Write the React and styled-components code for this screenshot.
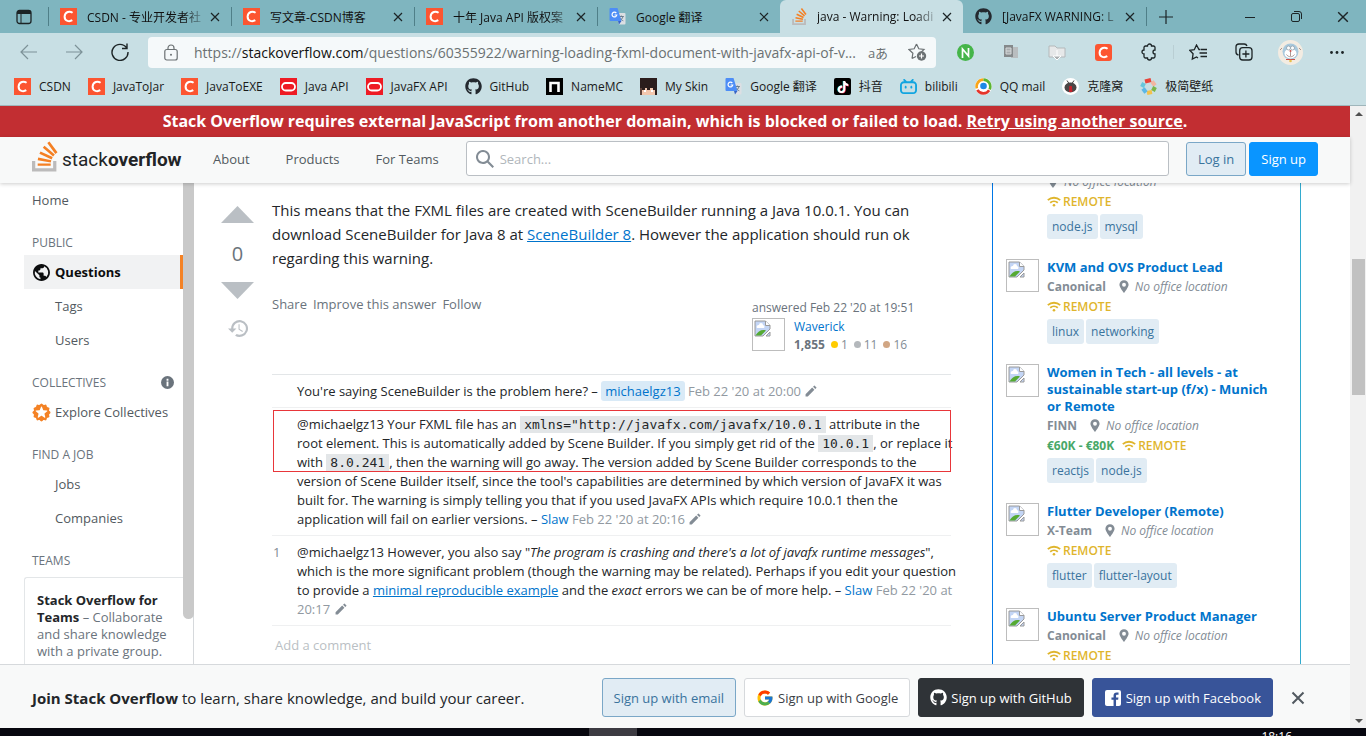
import React, { useState } from "react";
import styled, { createGlobalStyle, css } from "styled-components";
import { FaGithub } from "react-icons/fa";
import { FcGoogle } from "react-icons/fc";
import { SiBilibili, SiTiktok } from "react-icons/si";

const GlobalStyle = createGlobalStyle`
  * {
    box-sizing: border-box;
  }
  body {
    margin: 0;
    overflow: hidden;
    font-family: "Open Sans", "Noto Sans CJK SC", sans-serif;
    font-size: 12px;
    color: #232629;
  }
  button, input {
    font-family: inherit;
  }
  a {
    color: #0074cc;
    text-decoration: none;
  }
  svg {
    display: block;
    flex: none;
  }
`;

/* ---------- browser window ---------- */

const Window = styled.div`
  display: flex;
  flex-direction: column;
  height: 100vh;
  overflow: hidden;
  background-color: #c8dfe4;
`;
const TabStrip = styled.div`
  display: flex;
  align-items: stretch;
  height: 33px;
  flex: none;
  background-color: #7fb5bf;
`;
const IconButton = styled.button`
  display: flex;
  align-items: center;
  justify-content: center;
  flex: none;
  width: ${(p) => p.$width || 46}px;
  padding: 0;
  border: none;
  background: none;
  color: ${(p) => p.$color || "#1c2426"};
`;
const Tab = styled.div`
  display: flex;
  align-items: center;
  flex: 0 1 183px;
  min-width: 0;
  padding: 0 9px 0 12px;
  position: relative;
  ${(p) =>
    p.$active
      ? css`
          background-color: #c8dfe4;
          border-radius: 6px 6px 0 0;
        `
      : css`
          &::before {
            content: "";
            position: absolute;
            left: 0;
            top: 7px;
            bottom: 7px;
            width: 1px;
            background-color: ${p.$noLine ? "transparent" : "#4f7f88"};
          }
        `}
`;
const TabTitle = styled.span`
  flex: 1;
  margin-left: 10px;
  overflow: hidden;
  white-space: nowrap;
  color: #111;
  ${(p) => p.$fade && "mask-image: linear-gradient(to right, #000 80%, transparent);"}
`;
const TabEnd = styled.div`
  width: 1px;
  margin: 7px 0;
  background-color: #4f7f88;
`;
const Spacer = styled.div`
  flex: 1;
`;
const Toolbar = styled.div`
  display: flex;
  align-items: center;
  height: 38px;
  flex: none;
  padding: 0 5px;
`;
const AddressBar = styled.div`
  display: flex;
  align-items: center;
  flex: 1;
  min-width: 0;
  height: 31px;
  margin: 0 6px;
  padding-left: 16px;
  border-radius: 4px;
  background-color: #f5f9fa;
  color: #6b7173;
`;
const Url = styled.div`
  flex: 1;
  min-width: 0;
  margin-left: 16px;
  overflow: hidden;
  white-space: nowrap;
  font-size: 14px;
  outline: none;
  b {
    font-weight: 400;
    color: #111;
  }
`;
const Translate = styled.span`
  font-size: 13px;
`;
const Divider = styled.div`
  width: 1px;
  height: 14px;
  margin: 0 1px;
  background-color: #b9ced3;
`;
const BookmarkBar = styled.nav`
  display: flex;
  align-items: center;
  gap: 17px;
  height: 35px;
  flex: none;
  padding: 0 14px 4px;
  border-bottom: 1px solid #9fb6bb;
`;
const Bookmark = styled.a`
  display: flex;
  align-items: center;
  gap: 8px;
  white-space: nowrap;
  color: #1a1a1a;
`;
const Viewport = styled.div`
  display: flex;
  flex: 1;
  min-height: 0;
`;
const Page = styled.div`
  display: flex;
  flex-direction: column;
  flex: 1;
  min-width: 0;
  background-color: #fff;
  font-size: 13px;
`;
const Scrollbar = styled.div`
  display: flex;
  flex-direction: column;
  align-items: center;
  width: 16px;
  padding: 6px 1px 5px 2px;
  background-color: #f1f1f1;
`;
const ScrollThumb = styled.div`
  width: 13px;
  height: 136px;
  margin-top: 143px;
  margin-bottom: auto;
  background-color: #c1c1c1;
`;
const Arrow = styled.span`
  border: 4px solid transparent;
  ${(p) => (p.$down ? "border-top-color: #505050; border-bottom: 0;" : "border-bottom-color: #505050; border-top: 0;")}
`;
const Taskbar = styled.div`
  display: flex;
  height: 8px;
  flex: none;
  overflow: hidden;
  background-color: #07070f;
`;
const TaskbarApp = styled.div`
  width: 48px;
  margin-left: 589px;
  background-color: #3c3b42;
`;
const Clock = styled.span`
  margin-left: auto;
  margin-right: 74px;
  padding-top: 3px;
  line-height: 12px;
  color: #fff;
`;

/* ---------- site chrome ---------- */

const Banner = styled.div`
  flex: none;
  height: 31px;
  line-height: 31px;
  text-align: center;
  font-size: 16px;
  font-weight: 700;
  color: #fff;
  background-color: #c22e32;
  a {
    color: #fff;
    text-decoration: underline;
  }
`;
const TopBar = styled.header`
  display: flex;
  align-items: center;
  height: 46px;
  flex: none;
  padding: 0 32px 3px;
  background-color: #f8f9f9;
  box-shadow: 0 1px 4px rgba(0, 0, 0, 0.2);
  z-index: 1;
`;
const Logo = styled.a`
  display: flex;
  align-items: flex-end;
  gap: 4px;
  width: 150px;
  height: 38px;
  padding-bottom: 6px;
  font-family: Roboto, sans-serif;
  font-size: 19px;
  line-height: 25px;
  color: #222426;
  b {
    font-weight: 700;
  }
`;
const TopNav = styled.nav`
  display: flex;
  gap: 36px;
  margin: 0 27px 0 31px;
  a {
    color: #525960;
    white-space: nowrap;
  }
`;
const SearchBox = styled.label`
  display: flex;
  align-items: center;
  flex: 1;
  height: 35px;
  margin-right: 17px;
  padding-left: 9px;
  border: 1px solid #babfc4;
  border-radius: 3px;
  background-color: #fff;
  color: #838c95;
`;
const SearchInput = styled.input`
  flex: 1;
  margin-left: 6px;
  padding: 0;
  border: none;
  outline: none;
  background: none;
  font-size: 13px;
  &::placeholder {
    color: #b0b6bb;
  }
`;
const buttonKinds = {
  soft: css`
    color: #39739d;
    background-color: #e1ecf4;
    border-color: #7aa7c7;
  `,
  primary: css`
    color: #fff;
    background-color: #0a95ff;
    border-color: #0a95ff;
  `,
  google: css`
    color: #3b4045;
    background-color: #fff;
    border-color: #d6d9dc;
  `,
  github: css`
    color: #fff;
    background-color: #2f3337;
    border-color: #2f3337;
  `,
  facebook: css`
    color: #fff;
    background-color: #385499;
    border-color: #385499;
  `,
};
const Button = styled.button`
  display: flex;
  align-items: center;
  justify-content: center;
  gap: 4px;
  flex: none;
  height: ${(p) => (p.$large ? 39 : 34)}px;
  padding: 0 11px;
  border: 1px solid;
  border-radius: 3px;
  font-size: 13px;
  white-space: nowrap;
  ${(p) => buttonKinds[p.$kind]}
`;
const Account = styled.div`
  display: flex;
  gap: 3px;
`;
const Content = styled.div`
  display: flex;
  flex: 1;
  min-height: 0;
  overflow: hidden;
`;

/* ---------- left sidebar ---------- */

const Sidebar = styled.aside`
  display: flex;
  flex: none;
  width: 194px;
  padding-left: 24px;
  border-right: 1px solid #d6d9dc;
`;
const SideNav = styled.nav`
  flex: 1;
  min-width: 0;
`;
const SideScroll = styled.div`
  width: 11px;
  height: 436px;
  margin-right: -1px;
  border-radius: 0 0 6px 6px;
  background-color: #c9c9c9;
`;
const SideHeading = styled.div`
  display: flex;
  align-items: center;
  justify-content: space-between;
  height: 26px;
  margin-top: 12px;
  padding: 0 9px 0 8px;
  font-size: 12px;
  color: #6a737c;
`;
const SideLink = styled.a`
  display: flex;
  align-items: center;
  gap: 4px;
  height: 34px;
  padding-left: ${(p) => (p.$indent ? 31 : 8)}px;
  white-space: nowrap;
  color: #525960;
  ${(p) =>
    p.$current &&
    css`
      font-weight: 700;
      color: #0c0d0e;
      background-color: #f1f2f3;
      border-right: 3px solid #f48225;
    `}
`;
const TeamsCard = styled.div`
  margin-top: 4px;
  padding: 14px 12px;
  border: 1px solid #e3e6e8;
  border-right: none;
  border-radius: 3px 0 0 0;
  line-height: 17px;
  white-space: nowrap;
  color: #6a737c;
  b {
    color: #232629;
  }
`;

/* ---------- answer ---------- */

const Answer = styled.main`
  display: flex;
  flex: 1;
  min-width: 0;
  margin-left: 27px;
  padding-top: 15px;
`;
const Votes = styled.div`
  display: flex;
  flex-direction: column;
  align-items: center;
  width: 33px;
  margin-right: 18px;
  padding-top: 8px;
  color: #babfc4;
`;
const VoteButton = styled.button`
  padding: 0;
  border: none;
  background: none;
  color: #babfc4;
`;
const Score = styled.div`
  height: 59px;
  line-height: 61px;
  font-size: 20px;
  color: #6a737c;
`;
const HistoryIcon = styled.svg`
  margin-top: 20px;
`;
const AnswerBody = styled.div`
  flex: 1;
  min-width: 0;
`;
const Paragraph = styled.p`
  margin: 0;
  font-size: 15px;
  line-height: 24px;
  a {
    text-decoration: underline;
  }
`;
const PostFooter = styled.div`
  display: flex;
  justify-content: space-between;
  align-items: flex-start;
  height: 105px;
  padding-top: 24px;
  border-bottom: 1px solid #e3e6e8;
`;
const PostMenu = styled.div`
  display: flex;
  gap: 6px;
  line-height: 20px;
  a {
    color: #6a737c;
  }
`;
const Signature = styled.div`
  width: 199px;
  padding-top: 6px;
  font-size: 12px;
  line-height: 16px;
  color: #6a737c;
`;
const User = styled.div`
  display: flex;
  gap: 9px;
  margin-top: 2px;
  line-height: 18px;
`;
const Reputation = styled.div`
  display: flex;
  align-items: center;
  line-height: 17px;
`;
const Badge = styled.span`
  display: flex;
  align-items: center;
  gap: 3px;
  margin-left: 6px;
  color: #838c95;
  &::before {
    content: "";
    width: 7px;
    height: 7px;
    border-radius: 50%;
    background-color: ${(p) => p.$color};
  }
`;
const Comment = styled.div`
  display: flex;
  position: relative;
  padding: 7px 0 6px;
  border-bottom: 1px solid #eff0f1;
  line-height: 19px;
`;
const CommentScore = styled.div`
  width: 25px;
  flex: none;
  padding-left: 1px;
  color: #838c95;
`;
const CommentText = styled.div`
  flex: 1;
  white-space: nowrap;
`;
const Code = styled.code`
  padding: 1px 4px;
  background-color: #e3e6e8;
  font-family: "DejaVu Sans Mono", "Liberation Mono", monospace;
  font-size: 13px;
`;
const Owner = styled.a`
  padding: 1px 4px;
  border-radius: 3px;
  background-color: #d9eaf7;
`;
const When = styled.span`
  color: #9199a1;
`;
const UnderlinedLink = styled.a`
  text-decoration: underline;
`;
const PencilIcon = styled.svg`
  display: inline-block;
  vertical-align: -2px;
`;
const RedFrame = styled.div`
  position: absolute;
  top: 2px;
  left: 1px;
  right: 0;
  height: 62px;
  border: 1px solid #e8363a;
`;
const AddComment = styled.a`
  display: block;
  padding: 10px 3px;
  line-height: 19px;
  color: #babfc4;
`;

/* ---------- jobs ---------- */

const Jobs = styled.aside`
  flex: none;
  width: 309px;
  margin: -12px 49px 0 41px;
  padding-left: 13px;
  border-left: 1px solid #0077e6;
  border-right: 1px solid #33abcf;
  font-size: 12px;
`;
const Job = styled.div`
  display: grid;
  grid-template-columns: 33px 1fr;
  gap: 8px;
  margin-bottom: 20px;
`;
const JobInfo = styled.div`
  grid-column: 2;
  min-width: 0;
`;
const JobTitle = styled.a`
  display: block;
  font-size: 13px;
  font-weight: 700;
  line-height: 17px;
  padding-right: 20px;
`;
const JobLine = styled.div`
  display: flex;
  align-items: center;
  height: 20px;
  color: #838c95;
  b {
    margin-right: 12px;
  }
  i {
    margin-left: 5px;
  }
`;
const Salary = styled.span`
  margin-right: 8px;
  font-weight: 700;
  color: #48a868;
`;
const Remote = styled.span`
  display: flex;
  align-items: center;
  gap: 2px;
  font-weight: 600;
  color: #dfb52c;
`;
const Tags = styled.div`
  display: flex;
  gap: 2px;
  margin-top: 3px;
`;
const Tag = styled.a`
  height: 25px;
  padding: 0 5px;
  border-radius: 3px;
  line-height: 25px;
  color: #39739d;
  background-color: #e1ecf4;
`;
const Picture = styled.span`
  flex: none;
  width: 33px;
  height: 33px;
  padding: 1px;
  border: 1px solid #bdbdbd;
`;

/* ---------- join bar ---------- */

const JoinBar = styled.footer`
  display: flex;
  align-items: center;
  gap: 8px;
  height: 64px;
  flex: none;
  padding: 2px 35px 0 32px;
  border-top: 1px solid #d6d9dc;
  background-color: #f8f9f9;
  z-index: 1;
`;
const JoinText = styled.span`
  flex: 1;
  font-size: 15px;
`;

/* ---------- icons ---------- */

const CrossIcon = ({ size = 10 }) => (
  <svg width={size} height={size} viewBox="0 0 10 10" stroke="currentColor" strokeWidth="1.2">
    <path d="M1 1l8 8M9 1L1 9" />
  </svg>
);
const CsdnIcon = ({ round }) => (
  <svg width="17" height="17" viewBox="0 0 17 17">
    <rect width="17" height="17" rx={round ? 3 : 0} fill="#fc5531" />
    <path d="M12.6 4.8C10 3 5 3.200 4.600 8.500c0 5 4.900 5.500 7.700 3.700" fill="none" stroke="#fff" strokeWidth="2" />
  </svg>
);
const OracleIcon = () => (
  <svg width="17" height="17" viewBox="0 0 17 17">
    <rect width="17" height="17" fill="#ee1b24" />
    <rect x="2" y="5" width="13" height="7.500" rx="3.700" fill="none" stroke="#fff" strokeWidth="1.800" />
  </svg>
);
const TranslateIcon = () => (
  <svg width="17" height="17" viewBox="0 0 17 17">
    <path d="M7 5h8.500a1 1 0 0 1 1 1v9.500a1 1 0 0 1-1 1H10z" fill="#dcdfe3" />
    <path d="M9.800 8.500h5M12.300 7.500v1M14 8.500c-.5 2-2 3.500-3.500 4.200M10.800 9.500c.7 1.500 2 2.800 3.500 3.300" stroke="#6d7f8f" fill="none" />
    <path d="M1.500 0h7l4 13H1.500a1 1 0 0 1-1-1V1a1 1 0 0 1 1-1z" fill="#4d8df6" />
    <path d="M7.300 5A2.400 2.400 0 1 0 7.800 7H5.600" stroke="#fff" fill="none" strokeWidth="1.200" />
    <path d="M9 13h3.500L10 16.500z" fill="#3564c4" />
  </svg>
);
const StackIcon = ({ width = 26, height = 31 }) => (
  <svg width={width} height={height} viewBox="0 0 32 37">
    <path d="M26 33v-9h4v13H0V24h4v9h22Z" fill="#bcbbbb" />
    <path d="m21.500 0-2.700 2 9.900 13.300 2.700-2L21.500 0ZM26 18.400 13.300 7.800l2.100-2.500 12.700 10.600-2.100 2.500ZM9.100 15.200l15 7 1.400-3-15-7-1.400 3Zm14 10.790.68-2.950-16.100-3.350L7 23l16.100 2.990ZM23 30H7v-3h16v3Z" fill="#f48024" />
  </svg>
);
const NameMcIcon = () => (
  <svg width="17" height="17" viewBox="0 0 17 17">
    <rect width="17" height="17" fill="#000" />
    <path d="M4.500 14V5h8v9" fill="none" stroke="#fff" strokeWidth="2.600" />
  </svg>
);
const SkinIcon = () => (
  <svg width="17" height="17" viewBox="0 0 17 17">
    <rect width="17" height="17" fill="#2b1d1c" />
    <path d="M2 12h3v-2h2v2h3v-2h3v2h2v5H2z" fill="#f3c7ae" />
    <path d="M4 12h2v2H4zM11 12h2v2h-2z" fill="#fff" />
    <path d="M0 10h2v7H0z" fill="#5c4038" />
  </svg>
);
const DouyinIcon = () => (
  <svg width="17" height="17" viewBox="0 0 17 17">
    <rect width="17" height="17" rx="2" fill="#000" />
    <SiTiktok x="2.500" y="3" width="11" height="11" color="#25f4ee" />
    <SiTiktok x="3.500" y="3.500" width="11" height="11" color="#fe2c55" />
    <SiTiktok x="3" y="3" width="11" height="11" color="#fff" />
  </svg>
);
const QqMailIcon = () => (
  <svg width="17" height="17" viewBox="0 0 18 18">
    <circle cx="9" cy="9" r="9" fill="#fff" />
    <g fill="none" strokeWidth="2.800">
      <path d="M9 1.700A7.300 7.300 0 0 0 2 11" stroke="#f9a51a" />
      <path d="M9 1.700A7.300 7.300 0 0 1 15.500 12" stroke="#5cb531" />
      <path d="M2.500 12.500A7.300 7.300 0 0 0 15 13" stroke="#e5352b" />
    </g>
    <circle cx="9" cy="8.500" r="3.500" fill="#1e88e5" />
  </svg>
);
const BeetleIcon = () => (
  <svg width="17" height="17" viewBox="0 0 17 17">
    <circle cx="8.500" cy="8.500" r="8.500" fill="#fff" />
    <path d="M5 2.500l2 3M12 2.500l-2 3" stroke="#444" />
    <ellipse cx="8.500" cy="9.500" rx="6" ry="5" fill="#4a4646" />
    <path d="M7.300 8h2.600l.5 6H7z" fill="#c4222b" />
  </svg>
);
const WallpaperIcon = () => (
  <svg width="17" height="17" viewBox="0 0 17 17" fill="none" strokeWidth="4">
    <path d="M5 3.500L11 2" stroke="#e8443a" />
    <path d="M12 3.500l3 4" stroke="#f2b5a0" />
    <path d="M15 9l-2 4" stroke="#7ab648" />
    <path d="M12 14l-5 1" stroke="#f3c14b" />
    <path d="M6 14.500L3 10.500" stroke="#5cb8e6" />
    <path d="M2 9l2-4" stroke="#67c7dd" />
  </svg>
);
const BrokenImage = () => (
  <Picture role="img" aria-label="avatar">
    <svg width="17" height="17" viewBox="0 0 17 17">
      <path d="M1 1h10.500L16 5.500V9l-7 7H1z" fill="#c3d5f5" stroke="#9a9a9a" />
      <path d="M3 8a2 2 0 0 1 2-3 2 2 0 0 1 4 0 2 2 0 0 1 1 3z" fill="#fff" />
      <path d="M1.500 15.500C4 11 8 9 12 10.500l-5 5z" fill="#55aa33" />
      <path d="M11.500 1v4.500H16" fill="#fff" stroke="#9a9a9a" />
      <path d="M16 12v4h-4z" fill="#c3d5f5" stroke="#9a9a9a" />
    </svg>
  </Picture>
);
const PinIcon = () => (
  <svg width="12" height="13" viewBox="0 0 17 18" fill="#838c95">
    <path d="M8.100 17.700S2 9.900 2 6.380A6.440 6.440 0 0 1 8.500 0C12.090 0 15 2.860 15 6.380 15 9.910 8.900 17.700 8.900 17.700c-.22.29-.58.29-.8 0Zm.4-8.450a2.750 2.750 0 1 0 0-5.500 2.750 2.750 0 0 0 0 5.500Z" />
  </svg>
);
const WifiIcon = () => (
  <svg width="14" height="11" viewBox="0 0 14 11" fill="none" stroke="#dfb52c" strokeWidth="1.800">
    <path d="M.8 4.200C4.300.9 9.700.9 13.200 4.200M3.200 6.800c2.200-1.900 5.400-1.900 7.600 0" />
    <circle cx="7" cy="9.300" r="1.300" fill="#dfb52c" stroke="none" />
  </svg>
);
const Pencil = () => (
  <PencilIcon width="14" height="14" viewBox="0 0 18 18" fill="#838c95">
    <path d="m13.680 2.150 2.170 2.170c.2.2.2.51 0 .71L14.500 6.390l-2.880-2.880 1.350-1.360c.2-.2.51-.2.71 0ZM2 13.130l8.500-8.500 2.880 2.880-8.500 8.500H2v-2.880Z" />
  </PencilIcon>
);

/* ---------- data ---------- */

const tabs = [
  { title: "CSDN - 专业开发者社", icon: <CsdnIcon />, fade: true },
  { title: "写文章-CSDN博客", icon: <CsdnIcon /> },
  { title: "十年 Java API 版权案", icon: <CsdnIcon />, fade: true },
  { title: "Google 翻译", icon: <TranslateIcon /> },
  { title: "java - Warning: Loadi", icon: <StackIcon width={15} height={17} />, active: true, fade: true },
  { title: "[JavaFX WARNING: L", icon: <FaGithub size={17} color="#24292f" />, fade: true },
];

const bookmarks = [
  ["CSDN", <CsdnIcon />],
  ["JavaToJar", <CsdnIcon />],
  ["JavaToEXE", <CsdnIcon />],
  ["Java API", <OracleIcon />],
  ["JavaFX API", <OracleIcon />],
  ["GitHub", <FaGithub size={17} color="#24292f" />],
  ["NameMC", <NameMcIcon />],
  ["My Skin", <SkinIcon />],
  ["Google 翻译", <TranslateIcon />],
  ["抖音", <DouyinIcon />],
  ["bilibili", <SiBilibili size={17} color="#12a5e0" />],
  ["QQ mail", <QqMailIcon />],
  ["克隆窝", <BeetleIcon />],
  ["极简壁纸", <WallpaperIcon />],
];

const jobs = [
  { tags: ["node.js", "mysql"] },
  { title: "KVM and OVS Product Lead", company: "Canonical", tags: ["linux", "networking"] },
  {
    title: "Women in Tech - all levels - at sustainable start-up (f/x) - Munich or Remote",
    company: "FINN",
    salary: "€60K - €80K",
    tags: ["reactjs", "node.js"],
  },
  { title: "Flutter Developer (Remote)", company: "X-Team", tags: ["flutter", "flutter-layout"] },
  { title: "Ubuntu Server Product Manager", company: "Canonical", tags: [] },
];

function BrowserChrome() {
  return (
    <>
      <TabStrip>
        <IconButton $width={48} aria-label="Tab actions">
          <svg width="16" height="16" viewBox="0 0 16 16">
            <rect x="1" y="1.500" width="14" height="13" rx="2.500" fill="none" stroke="currentColor" strokeWidth="1.300" />
            <path d="M1 5V4a3 3 0 0 1 3-3h8a3 3 0 0 1 3 3v1z" fill="currentColor" />
            <path d="M5 5v9.500" stroke="currentColor" />
          </svg>
        </IconButton>
        {tabs.map((tab, index) => (
          <Tab key={index} $active={tab.active} $noLine={index === 5}>
            {tab.icon}
            <TabTitle $fade={tab.fade}>{tab.title}</TabTitle>
            <IconButton $width={14} aria-label="Close tab">
              <CrossIcon />
            </IconButton>
          </Tab>
        ))}
        <TabEnd />
        <IconButton $width={38} aria-label="New tab">
          <svg width="14" height="14" viewBox="0 0 14 14" stroke="currentColor" strokeWidth="1.200">
            <path d="M7 0v14M0 7h14" />
          </svg>
        </IconButton>
        <Spacer />
        <IconButton $width={47} aria-label="Minimize">
          <svg width="10" height="10" viewBox="0 0 10 10" stroke="currentColor"><path d="M0 5.500h10" /></svg>
        </IconButton>
        <IconButton $width={47} aria-label="Restore">
          <svg width="11" height="11" viewBox="0 0 11 11" fill="none" stroke="currentColor">
            <rect x=".5" y="2.500" width="8" height="8" rx="1.500" />
            <path d="M3 .5h5a2.500 2.500 0 0 1 2.500 2.500v5" />
          </svg>
        </IconButton>
        <IconButton aria-label="Close"><CrossIcon size={12} /></IconButton>
      </TabStrip>
      <Toolbar>
        <IconButton $color="#7d9298" aria-label="Back">
          <svg width="17" height="16" viewBox="0 0 17 16" fill="none" stroke="currentColor" strokeWidth="1.200"><path d="M17 8H1M8 1L1 8l7 7" /></svg>
        </IconButton>
        <IconButton $color="#7d9298" aria-label="Forward">
          <svg width="17" height="16" viewBox="0 0 17 16" fill="none" stroke="currentColor" strokeWidth="1.200"><path d="M0 8h16M9 1l7 7-7 7" /></svg>
        </IconButton>
        <IconButton $width={45} aria-label="Refresh">
          <svg width="18" height="18" viewBox="0 0 18 18" fill="none" stroke="currentColor" strokeWidth="1.400"><path d="M15.500 4.700A8 8 0 1 0 17 9M16 .5v5h-5" /></svg>
        </IconButton>
        <AddressBar>
          <svg width="14" height="17" viewBox="0 0 14 17" fill="none" stroke="currentColor" strokeWidth="1.200">
            <rect x=".8" y="5.500" width="12.400" height="10.500" rx="2" />
            <path d="M4 5.500V4a3 3 0 0 1 6 0v1.500" />
            <circle cx="7" cy="10.700" r="1" fill="currentColor" stroke="none" />
          </svg>
          <Url role="textbox" aria-label="Address" contentEditable suppressContentEditableWarning spellCheck={false}>
            https://<b>stackoverflow.com</b>/questions/60355922/warning-loading-fxml-document-with-javafx-api-of-v...
          </Url>
          <IconButton $width={40} $color="#6b7173" aria-label="Translate page"><Translate>aあ</Translate></IconButton>
          <IconButton $width={38} $color="#6b7173" aria-label="Add to favorites">
            <svg width="19" height="18" viewBox="0 0 19 18" fill="none" stroke="currentColor" strokeWidth="1.200">
              <path d="M8.500 1l2.300 4.800 5.200.7-3.800 3.600M4 15.500l.9-5.300-3.900-3.700 5.200-.7L8.500 1M4 15.500l4-2" />
              <circle cx="13.500" cy="13" r="4.700" fill="#6b7173" stroke="none" />
              <path d="M13.500 10.500v5M11 13h5" stroke="#fff" />
            </svg>
          </IconButton>
        </AddressBar>
        <IconButton aria-label="Extension">
          <svg width="17" height="17" viewBox="0 0 17 17">
            <circle cx="8.500" cy="8.500" r="8.500" fill="#45b549" />
            <path d="M5.500 14V5l6 7V4" fill="none" stroke="#fff" strokeWidth="1.700" />
          </svg>
        </IconButton>
        <IconButton aria-label="Page extension">
          <svg width="16" height="16" viewBox="0 0 16 16">
            <path d="M8 3h7v11H8z" fill="#b9bdbf" />
            <path d="M1 1h9v12H1z" fill="#85898b" />
            <path d="M3 4h5v6H3zM3 7h5" fill="#a9adaf" stroke="#d5d8d9" />
          </svg>
        </IconButton>
        <IconButton aria-label="Folder extension">
          <svg width="18" height="16" viewBox="0 0 18 16">
            <path d="M1 2h6l2 2h8v9H1z" fill="#e6e8e9" stroke="#b4b8ba" />
            <path d="M9 6v6M9 16l-4-4h8z" fill="#a9aeb0" stroke="#fff" />
          </svg>
        </IconButton>
        <IconButton aria-label="CSDN extension"><CsdnIcon round /></IconButton>
        <IconButton aria-label="Extensions">
          <svg width="17" height="18" viewBox="0 0 17 18" fill="none" stroke="currentColor" strokeWidth="1.300">
            <path d="M4.500 3h2a2 2 0 0 1 4 0h2a1.500 1.500 0 0 1 1.500 1.500V7a2 2 0 0 0 0 4v2.500a1.500 1.500 0 0 1-1.500 1.500h-2a2 2 0 0 1-4 0h-2A1.500 1.500 0 0 1 3 13.500V11a2 2 0 0 1 0-4V4.500A1.500 1.500 0 0 1 4.500 3z" />
          </svg>
        </IconButton>
        <Divider />
        <IconButton aria-label="Favorites">
          <svg width="18" height="17" viewBox="0 0 18 17" fill="none" stroke="currentColor" strokeWidth="1.300">
            <path d="M11 5.500L10 5.500 7.500 1 5.300 5.700.8 6.300l3.300 3.400-.8 5.500 4.200-2.200 1.500 1M11.500 5.500H18M10.500 9H18M11.500 12.500H18" />
          </svg>
        </IconButton>
        <IconButton aria-label="Collections">
          <svg width="18" height="18" viewBox="0 0 18 18" fill="none" stroke="currentColor" strokeWidth="1.300">
            <path d="M3.500 12A3 3 0 0 1 1 9V4a3 3 0 0 1 3-3h5a3 3 0 0 1 3 2" />
            <rect x="4.700" y="4.700" width="12.300" height="12.300" rx="3" />
            <path d="M10.900 7.500v7M7.400 11h7" />
          </svg>
        </IconButton>
        <IconButton aria-label="Profile">
          <svg width="25" height="25" viewBox="0 0 25 25">
            <circle cx="12.500" cy="12.500" r="12.500" fill="#f3ece2" />
            <circle cx="12.500" cy="11.500" r="8" fill="#a9c9dd" />
            <ellipse cx="12.500" cy="13.500" rx="6" ry="5" fill="#fff" />
            <circle cx="10.500" cy="8" r="2" fill="#fff" stroke="#7c8c96" strokeWidth=".6" />
            <circle cx="14.500" cy="8" r="2" fill="#fff" stroke="#7c8c96" strokeWidth=".6" />
            <circle cx="12.500" cy="11" r="1" fill="#c9504a" />
            <path d="M12.500 12v4M8.500 14.500c2 3 6 3 8 0M4 8L2 10M21 8l2 2" fill="none" stroke="#8b6d66" strokeWidth=".7" />
            <path d="M8 19.500h9" stroke="#c9504a" />
            <circle cx="12.500" cy="21" r="1.300" fill="#e8c04a" />
          </svg>
        </IconButton>
        <IconButton $width={48} aria-label="Settings and more">
          <svg width="14" height="3" viewBox="0 0 14 3" fill="currentColor">
            <circle cx="1.500" cy="1.500" r="1.400" /><circle cx="7" cy="1.500" r="1.400" /><circle cx="12.500" cy="1.500" r="1.400" />
          </svg>
        </IconButton>
      </Toolbar>
      <BookmarkBar>
        {bookmarks.map(([name, icon]) => (
          <Bookmark href="#" key={name}>
            {icon}
            {name}
          </Bookmark>
        ))}
      </BookmarkBar>
    </>
  );
}

function LeftSidebar() {
  return (
    <Sidebar>
      <SideNav>
        <SideLink href="#">Home</SideLink>
        <SideHeading>PUBLIC</SideHeading>
        <SideLink href="#" $current>
          <svg width="19" height="19" viewBox="0 0 18 18" fill="#0c0d0e">
            <path d="M9 1C4.640 1 1 4.640 1 9c0 4.360 3.640 8 8 8 4.360 0 8-3.640 8-8 0-4.360-3.640-8-8-8ZM8 15.320a6.460 6.460 0 0 1-4.300-2.740 6.460 6.460 0 0 1-.93-5.010L7 11.680v.8c0 .88.12 1.320 1 1.320v1.520Zm5.720-2c-.2-.66-1-1.320-1.720-1.320h-1v-2c0-.44-.56-1-1-1H6V7h1c.44 0 1-.56 1-1V5h2c.88 0 1.400-.72 1.400-1.600v-.33a6.450 6.450 0 0 1 3.830 4.510 6.450 6.450 0 0 1-1.510 5.730v.01Z" />
          </svg>
          Questions
        </SideLink>
        <SideLink href="#" $indent>Tags</SideLink>
        <SideLink href="#" $indent>Users</SideLink>
        <SideHeading>
          COLLECTIVES
          <svg width="13" height="13" viewBox="0 0 14 14">
            <circle cx="7" cy="7" r="7" fill="#6a737c" />
            <path d="M7 3v2M7 6v5" stroke="#fff" strokeWidth="2" />
          </svg>
        </SideHeading>
        <SideLink href="#">
          <svg width="19" height="19" viewBox="0 0 18 18" fill="#f48225">
            <path d="M9.860.89a1.140 1.140 0 0 0-1.720 0l-.5.58c-.3.35-.79.48-1.230.33l-.72-.25a1.140 1.140 0 0 0-1.490.85l-.14.76c-.1.45-.45.8-.9.9l-.76.14c-.67.14-1.080.83-.85 1.490l.25.72c.15.44.02.92-.33 1.230l-.58.5a1.140 1.140 0 0 0 0 1.720l.58.5c.35.3.48.79.33 1.230l-.25.72c-.23.66.18 1.350.85 1.490l.76.14c.45.1.8.45.9.9l.14.76c.14.67.83 1.080 1.490.85l.72-.25c.44-.15.92-.02 1.230.33l.5.58c.46.52 1.260.52 1.720 0l.5-.58c.3-.35.79-.48 1.230-.33l.72.25c.66.23 1.350-.18 1.490-.85l.14-.76c.1-.45.45-.8.9-.9l.76-.14c.67-.14 1.080-.83.85-1.490l-.25-.72c-.15-.44-.02-.92.33-1.230l.58-.5c.52-.46.52-1.260 0-1.720l-.58-.5c-.35-.3-.48-.79-.33-1.230l.25-.72a1.140 1.140 0 0 0-.85-1.490l-.76-.14c-.45-.1-.8-.45-.9-.9l-.14-.76a1.140 1.140 0 0 0-1.490-.85l-.72.25c-.44.15-.92.02-1.230-.33l-.5-.58Zm-.49 2.670L10.600 6.600c.05.15.19.24.34.25l3.260.22c.36.03.5.48.23.71l-2.500 2.100a.4.4 0 0 0-.14.4l.8 3.160c.09.35-.3.63-.61.44L9.200 12.140a.4.4 0 0 0-.42 0l-2.770 1.740c-.3.2-.7-.09-.6-.44l.8-3.160a.4.4 0 0 0-.14-.4l-2.500-2.100a.4.4 0 0 1 .22-.7l3.260-.23a.4.4 0 0 0 .34-.25l1.220-3.030a.4.4 0 0 1 .74 0Z" />
          </svg>
          Explore Collectives
        </SideLink>
        <SideHeading>FIND A JOB</SideHeading>
        <SideLink href="#" $indent>Jobs</SideLink>
        <SideLink href="#" $indent>Companies</SideLink>
        <SideHeading>TEAMS</SideHeading>
        <TeamsCard>
          <b>Stack Overflow for<br />Teams</b> – Collaborate<br />and share knowledge<br />with a private group.
        </TeamsCard>
      </SideNav>
      <SideScroll />
    </Sidebar>
  );
}

function AnswerPost() {
  return (
    <Answer>
      <Votes>
        <VoteButton aria-label="Up vote">
          <svg width="33" height="17" viewBox="0 0 33 17" fill="currentColor"><path d="M0 17h33L16.500 0z" /></svg>
        </VoteButton>
        <Score>0</Score>
        <VoteButton aria-label="Down vote">
          <svg width="33" height="17" viewBox="0 0 33 17" fill="currentColor"><path d="M0 0h33L16.500 17z" /></svg>
        </VoteButton>
        <HistoryIcon width="20" height="19" viewBox="0 0 19 18" fill="currentColor">
          <path d="M3 9a8 8 0 1 1 3.730 6.770L8.200 14.300A6 6 0 1 0 5 9l3.010-.01-4 4-4-4h3L3 9Zm7-4h1.010L11 9.360l3.220 2.100-.6.930L10 10V5Z" />
        </HistoryIcon>
      </Votes>
      <AnswerBody>
        <Paragraph>
          This means that the FXML files are created with SceneBuilder running a Java 10.0.1. You can<br />
          download SceneBuilder for Java 8 at <a href="#">SceneBuilder 8</a>. However the application should run ok<br />
          regarding this warning.
        </Paragraph>
        <PostFooter>
          <PostMenu>
            <a href="#">Share</a>
            <a href="#">Improve this answer</a>
            <a href="#">Follow</a>
          </PostMenu>
          <Signature>
            answered Feb 22 '20 at 19:51
            <User>
              <BrokenImage />
              <div>
                <a href="#">Waverick</a>
                <Reputation>
                  <b>1,855</b>
                  <Badge $color="#ffcc01">1</Badge>
                  <Badge $color="#b4b8bc">11</Badge>
                  <Badge $color="#d1a684">16</Badge>
                </Reputation>
              </div>
            </User>
          </Signature>
        </PostFooter>
        <Comment>
          <CommentScore />
          <CommentText>
            You're saying SceneBuilder is the problem here? – <Owner href="#">michaelgz13</Owner>{" "}
            <When>Feb 22 '20 at 20:00</When> <Pencil />
          </CommentText>
        </Comment>
        <Comment>
          <CommentScore />
          <CommentText>
            @michaelgz13 Your FXML file has an <Code>xmlns="http://javafx.com/javafx/10.0.1</Code> attribute in the<br />
            root element. This is automatically added by Scene Builder. If you simply get rid of the <Code>10.0.1</Code>, or replace it<br />
            with <Code>8.0.241</Code>, then the warning will go away. The version added by Scene Builder corresponds to the<br />
            version of Scene Builder itself, since the tool's capabilities are determined by which version of JavaFX it was<br />
            built for. The warning is simply telling you that if you used JavaFX APIs which require 10.0.1 then the<br />
            application will fail on earlier versions. – <a href="#">Slaw</a> <When>Feb 22 '20 at 20:16</When> <Pencil />
          </CommentText>
          <RedFrame />
        </Comment>
        <Comment>
          <CommentScore>1</CommentScore>
          <CommentText>
            @michaelgz13 However, you also say "<i>The program is crashing and there's a lot of javafx runtime messages</i>",<br />
            which is the more significant problem (though the warning may be related). Perhaps if you edit your question<br />
            to provide a <UnderlinedLink href="#">minimal reproducible example</UnderlinedLink> and the <i>exact</i> errors we can be of more help. – <a href="#">Slaw</a>{" "}
            <When>Feb 22 '20 at<br />20:17</When> <Pencil />
          </CommentText>
        </Comment>
        <AddComment href="#">Add a comment</AddComment>
      </AnswerBody>
    </Answer>
  );
}

function JobList() {
  return (
    <Jobs>
      {jobs.map((job, index) => (
        <Job key={index}>
          {job.title && <BrokenImage />}
          <JobInfo>
            {job.title && <JobTitle href="#">{job.title}</JobTitle>}
            <JobLine>
              {job.company && <b>{job.company}</b>}
              <PinIcon />
              <i>No office location</i>
            </JobLine>
            <JobLine>
              {job.salary && <Salary>{job.salary}</Salary>}
              <Remote><WifiIcon />REMOTE</Remote>
            </JobLine>
            <Tags>
              {job.tags.map((tag) => (
                <Tag href="#" key={tag}>{tag}</Tag>
              ))}
            </Tags>
          </JobInfo>
        </Job>
      ))}
    </Jobs>
  );
}

function App() {
  const [search, setSearch] = useState("");

  return (
    <Window>
      <GlobalStyle />
      <BrowserChrome />
      <Viewport>
        <Page>
          <Banner>
            Stack Overflow requires external JavaScript from another domain, which is blocked or failed to load.{" "}
            <a href="#">Retry using another source</a>.
          </Banner>
          <TopBar>
            <Logo href="#">
              <StackIcon />
              <span>stack<b>overflow</b></span>
            </Logo>
            <TopNav>
              <a href="#">About</a>
              <a href="#">Products</a>
              <a href="#">For Teams</a>
            </TopNav>
            <SearchBox>
              <svg width="18" height="18" viewBox="0 0 18 18" fill="currentColor">
                <path d="m18 16.500-5.140-5.180h-.35a7 7 0 1 0-1.190 1.190v.35L16.500 18l1.500-1.500ZM12 7A5 5 0 1 1 2 7a5 5 0 0 1 10 0Z" />
              </svg>
              <SearchInput placeholder="Search..." aria-label="Search" value={search} onChange={(e) => setSearch(e.target.value)} />
            </SearchBox>
            <Account>
              <Button $kind="soft">Log in</Button>
              <Button $kind="primary">Sign up</Button>
            </Account>
          </TopBar>
          <Content>
            <LeftSidebar />
            <AnswerPost />
            <JobList />
          </Content>
          <JoinBar>
            <JoinText>
              <b>Join Stack Overflow</b> to learn, share knowledge, and build your career.
            </JoinText>
            <Button $kind="soft" $large>Sign up with email</Button>
            <Button $kind="google" $large><FcGoogle size={18} />Sign up with Google</Button>
            <Button $kind="github" $large><FaGithub size={17} />Sign up with GitHub</Button>
            <Button $kind="facebook" $large>
              <svg width="18" height="18" viewBox="0 0 18 18" fill="#fff">
                <path d="M3 1a2 2 0 0 0-2 2v12c0 1.100.9 2 2 2h6.550v-6.200H7.460V8.400h2.090V6.610c0-2.070 1.260-3.200 3.100-3.200.88 0 1.640.07 1.870.1v2.160h-1.290c-1 0-1.190.48-1.190 1.180V8.400h2.390l-.31 2.420h-2.080V17H15a2 2 0 0 0 2-2V3a2 2 0 0 0-2-2H3Z" />
              </svg>
              Sign up with Facebook
            </Button>
            <IconButton $width={34} $color="#525960" aria-label="Dismiss">
              <svg width="14" height="14" viewBox="0 0 14 14" stroke="currentColor" strokeWidth="2"><path d="M1.500 1.500l11 11M12.500 1.500l-11 11" /></svg>
            </IconButton>
          </JoinBar>
        </Page>
        <Scrollbar>
          <Arrow />
          <ScrollThumb />
          <Arrow $down />
        </Scrollbar>
      </Viewport>
      <Taskbar>
        <TaskbarApp />
        <Clock>18:16</Clock>
      </Taskbar>
    </Window>
  );
}

export default App;
